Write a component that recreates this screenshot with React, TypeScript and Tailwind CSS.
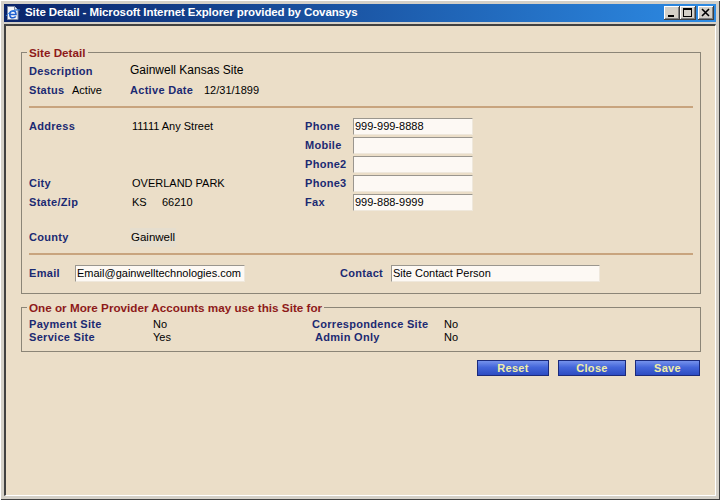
import React from "react";

const LBL = "font-bold text-[11px] tracking-[0.3px] text-[#1b2a72] whitespace-nowrap";
const VAL = "text-[11px] text-black whitespace-nowrap";
const INP =
  "h-[17px] bg-[#fdf9f4] border border-t-[#9a968e] border-l-[#9a968e] border-r-[#efe8dc] border-b-[#efe8dc] text-[11px] text-black pl-[1px] flex items-center whitespace-nowrap overflow-hidden";
const LEG = "font-bold text-[11.7px] leading-[13px] text-[#8e1a1a] px-[2px] ml-[-2px] whitespace-nowrap";
const BTN =
  "h-[16px] bg-[linear-gradient(to_bottom,#7592ec,#4466da_45%,#2d4cc2)] border border-[#1b2a7a] text-[#f1eea6] font-bold text-[11px] tracking-[0.3px] flex items-center justify-center";
const TB =
  "w-[16px] h-[14px] bg-[#d4d0c8] shadow-[inset_-1px_-1px_0_#404040,inset_1px_1px_0_#ffffff,inset_-2px_-2px_0_#808080] flex items-center justify-center";

function IEIcon() {
  return (
    <svg width="16" height="16" viewBox="0 0 16 16">
      <path d="M2.5 1.5h7l3.5 3.5v9.5H2.5z" fill="#f4f6fb" stroke="#7c8aa6" />
      <path d="M9.5 1.5v3.5h3.5" fill="#dfe6f2" stroke="#7c8aa6" />
      <path
        d="M5 9.5h6c0-2.2-1.3-3.5-3-3.5s-3.2 1.4-3.2 3.4 1.3 3.4 3.2 3.4c1.2 0 2.2-.5 2.7-1.4"
        fill="none"
        stroke="#1f5fd0"
        strokeWidth="1.6"
      />
      <path d="M1 11c3-4 9-7 14-6" fill="none" stroke="#2a7be0" strokeWidth="1" />
    </svg>
  );
}

export default function App() {
  return (
    <div className="w-[720px] h-[500px] bg-[#d4d0c8] p-[4px] flex flex-col font-['Liberation_Sans',Arial,sans-serif] shadow-[inset_1px_1px_0_#ffffff,inset_-1px_-1px_0_#404040]">
      {/* Title bar */}
      <div className="h-[18px] bg-[linear-gradient(to_right,#0a246a,#2d8be4)] flex items-center pl-[1px] pr-[2px]">
        <IEIcon />
        <span className="ml-[4px] text-white font-bold text-[11.5px] tracking-[-0.1px] whitespace-nowrap">
          Site Detail - Microsoft Internet Explorer provided by Covansys
        </span>
        <div className="ml-auto flex items-center">
          <div className={TB}>
            <svg width="16" height="14" viewBox="0 0 16 14">
              <rect x="4" y="9" width="6" height="2" fill="#000" />
            </svg>
          </div>
          <div className={TB}>
            <svg width="16" height="14" viewBox="0 0 16 14">
              <rect x="3.5" y="2.5" width="8" height="8" fill="none" stroke="#000" />
              <rect x="3" y="2" width="9" height="2" fill="#000" />
            </svg>
          </div>
          <div className={`${TB} ml-[2px]`}>
            <svg width="16" height="14" viewBox="0 0 16 14">
              <path d="M4 3l7 7M11 3l-7 7" stroke="#000" strokeWidth="1.6" />
            </svg>
          </div>
        </div>
      </div>

      {/* Client area */}
      <div className="mt-[2px] flex-1 bg-[#ebdec8] border-t-2 border-l-2 border-r border-b border-t-[#404040] border-l-[#404040] border-r-[#ffffff] border-b-[#ffffff] pl-[15px] pr-[14px] pt-[20px] flex flex-col">
        {/* Fieldset 1 */}
        <fieldset className="border border-[#8b8577] px-[7px] pb-[11px] min-w-0">
          <legend className={LEG}>Site Detail</legend>
          <div className="mt-[3px] h-[19px] flex items-center">
            <span className={`${LBL} w-[101px]`}>Description</span>
            <span className="text-[12px] text-black whitespace-nowrap pb-[3px]">Gainwell Kansas Site</span>
          </div>
          <div className="h-[19px] flex items-center">
            <span className={`${LBL} w-[43px]`}>Status</span>
            <span className={`${VAL} w-[58px]`}>Active</span>
            <span className={`${LBL} w-[74px]`}>Active Date</span>
            <span className={VAL}>12/31/1899</span>
          </div>
          <div className="mt-[6px] h-[2px] bg-[#c8a47e]" />

          <div className="mt-[9px] grid grid-cols-[103px_173px_48px_120px] auto-rows-[19px] items-center">
            <span className={LBL}>Address</span>
            <span className={VAL}>11111 Any Street</span>
            <span className={LBL}>Phone</span>
            <div className={INP}>999-999-8888</div>

            <span />
            <span />
            <span className={LBL}>Mobile</span>
            <div className={INP}></div>

            <span />
            <span />
            <span className={LBL}>Phone2</span>
            <div className={INP}></div>

            <span className={LBL}>City</span>
            <span className={VAL}>OVERLAND PARK</span>
            <span className={LBL}>Phone3</span>
            <div className={INP}></div>

            <span className={LBL}>State/Zip</span>
            <span className={`${VAL} flex`}>
              <span className="w-[30px]">KS</span>
              <span>66210</span>
            </span>
            <span className={LBL}>Fax</span>
            <div className={INP}>999-888-9999</div>
          </div>

          <div className="mt-[16px] h-[19px] flex items-center">
            <span className={`${LBL} w-[101px]`}>County</span>
            <span className="text-[11.5px] text-black whitespace-nowrap bg-[#e6dece] h-[19px] flex items-center px-[1px]">
              Gainwell
            </span>
          </div>
          <div className="mt-[6px] h-[2px] bg-[#c8a47e]" />

          <div className="mt-[10px] h-[17px] flex items-center">
            <span className={`${LBL} w-[46px]`}>Email</span>
            <div className={`${INP} w-[170px]`}>Email@gainwelltechnologies.com</div>
            <span className="w-[95px]" />
            <span className={`${LBL} w-[51px]`}>Contact</span>
            <div className={`${INP} w-[209px]`}>Site Contact Person</div>
          </div>
        </fieldset>

        {/* Fieldset 2 */}
        <fieldset className="mt-[7px] border border-[#8b8577] px-[7px] pb-[7px] min-w-0">
          <legend className={LEG}>One or More Provider Accounts may use this Site for</legend>
          <div className="mt-[4px] grid grid-cols-[124px_159px_132px_1fr] auto-rows-[13px] items-center">
            <span className={LBL}>Payment Site</span>
            <span className={VAL}>No</span>
            <span className={LBL}>Correspondence Site</span>
            <span className={VAL}>No</span>

            <span className={LBL}>Service Site</span>
            <span className={VAL}>Yes</span>
            <span className={`${LBL} pl-[3px]`}>Admin Only</span>
            <span className={VAL}>No</span>
          </div>
        </fieldset>

        {/* Buttons */}
        <div className="mt-[8px] flex justify-end gap-[9px] pr-[1px]">
          <button className={`${BTN} w-[72px]`}>Reset</button>
          <button className={`${BTN} w-[68px]`}>Close</button>
          <button className={`${BTN} w-[65px]`}>Save</button>
        </div>
      </div>
    </div>
  );
}
